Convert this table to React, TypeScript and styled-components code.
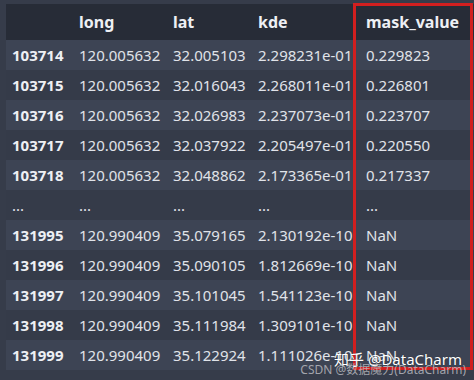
import React from "react";
import styled, { createGlobalStyle } from "styled-components";

const Global = createGlobalStyle`
  html, body { margin: 0; padding: 0; background: #363c4a; }
  body { width: 474px; height: 380px; overflow: hidden; }
`;

const Page = styled.div`
  position: relative;
  width: 474px;
  height: 380px;
  padding: 4px 0 0 6px;
  box-sizing: border-box;
  font-family: "Noto Sans", "Open Sans", "Noto Sans CJK SC", sans-serif;
  font-size: 15px;
  color: #e0e3e9;
`;

const Table = styled.div`
  display: grid;
  grid-template-columns: 67px 94px 85px 109px 113px;
`;

const Row = styled.div<{ $variant: "head" | "odd" | "even" }>`
  display: contents;
  & > div {
    background: ${(p) =>
      p.$variant === "head" ? "#272c37" : p.$variant === "odd" ? "#3d4454" : "#353b49"};
    height: ${(p) => (p.$variant === "head" ? "36px" : "30px")};
    font-size: ${(p) => (p.$variant === "head" ? "16px" : "15px")};
  }
`;

const Cell = styled.div<{ $bold?: boolean; $pad?: number }>`
  display: flex;
  align-items: center;
  padding-left: ${(p) => p.$pad ?? 6}px;
  font-weight: ${(p) => (p.$bold ? 700 : 400)};
  color: ${(p) => (p.$bold ? "#eef0f4" : "#e0e3e9")};
  white-space: nowrap;
  overflow: hidden;
`;

const Highlight = styled.div`
  position: absolute;
  left: 353px;
  top: 3px;
  width: 120px;
  height: 367px;
  border: 3px solid #d21f1f;
  box-sizing: border-box;
  pointer-events: none;
`;

const Watermark = styled.div`
  position: absolute;
  right: 8px;
  bottom: 4px;
  display: flex;
  flex-direction: column;
  align-items: flex-end;
  pointer-events: none;
`;

const Mark = styled.div`
  font-size: 15px;
  line-height: 18px;
  color: #ffffff;
  white-space: nowrap;
  margin-right: 4px;
  text-shadow: 0 0 1px rgba(0, 0, 0, 0.4);
`;

const SubMark = styled.div`
  font-size: 12px;
  line-height: 13px;
  margin-top: -5px;
  color: rgba(200, 200, 205, 0.75);
  white-space: nowrap;
`;

const head = ["", "long", "lat", "kde", "mask_value"];
const rows: string[][] = [
  ["103714", "120.005632", "32.005103", "2.298231e-01", "0.229823"],
  ["103715", "120.005632", "32.016043", "2.268011e-01", "0.226801"],
  ["103716", "120.005632", "32.026983", "2.237073e-01", "0.223707"],
  ["103717", "120.005632", "32.037922", "2.205497e-01", "0.220550"],
  ["103718", "120.005632", "32.048862", "2.173365e-01", "0.217337"],
  ["...", "...", "...", "...", "..."],
  ["131995", "120.990409", "35.079165", "2.130192e-10", "NaN"],
  ["131996", "120.990409", "35.090105", "1.812669e-10", "NaN"],
  ["131997", "120.990409", "35.101045", "1.541123e-10", "NaN"],
  ["131998", "120.990409", "35.111984", "1.309101e-10", "NaN"],
  ["131999", "120.990409", "35.122924", "1.111026e-10", "NaN"],
];

const pads = [6, 6, 6, 6, 5];

export default function App() {
  return (
    <>
      <Global />
      <Page>
        <Table>
          <Row $variant="head">
            {head.map((h, i) => (
              <Cell key={i} $bold $pad={pads[i]}>{h}</Cell>
            ))}
          </Row>
          {rows.map((r, ri) => (
            <Row key={ri} $variant={ri % 2 === 0 ? "odd" : "even"}>
              {r.map((c, ci) => (
                <Cell key={ci} $bold={ci === 0 && c !== "..."} $pad={pads[ci]}>
                  {c}
                </Cell>
              ))}
            </Row>
          ))}
        </Table>
        <Highlight />
        <Watermark>
          <Mark>知乎 @DataCharm</Mark>
          <SubMark>CSDN @数据魔力(DataCharm)</SubMark>
        </Watermark>
      </Page>
    </>
  );
}
